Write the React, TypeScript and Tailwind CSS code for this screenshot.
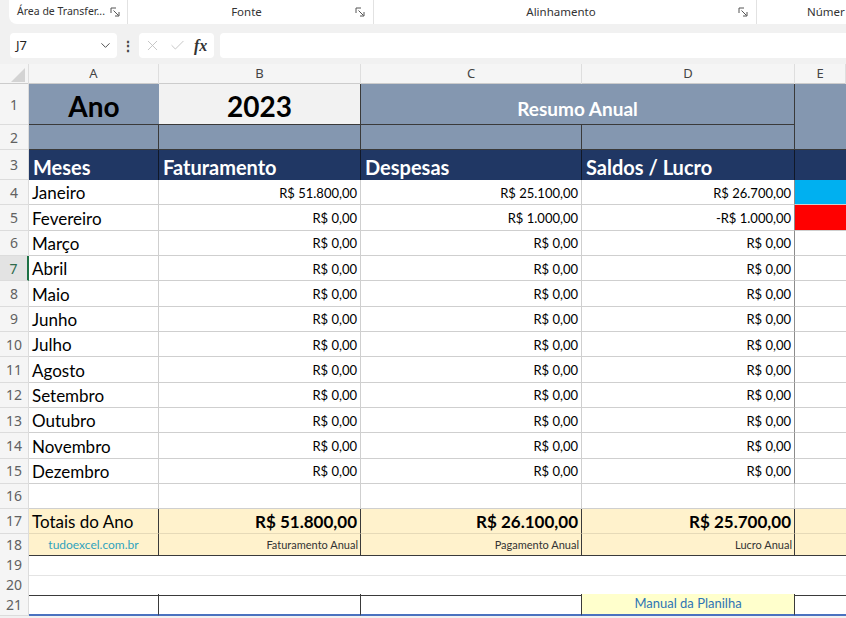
import { X, Check, ChevronDown } from 'lucide-react';

const GRID = 'grid grid-cols-[29px_130px_202px_221px_213px_1fr]';
const CELL = "flex items-end overflow-hidden whitespace-nowrap font-['Lato',sans-serif]";
const DATA = 'border-r border-b border-[#cfcfcf]';

const months = [
  'Janeiro', 'Fevereiro', 'Março', 'Abril', 'Maio', 'Junho',
  'Julho', 'Agosto', 'Setembro', 'Outubro', 'Novembro', 'Dezembro',
];

const values: Record<string, [string, string, string]> = {
  Janeiro: ['R$ 51.800,00', 'R$ 25.100,00', 'R$ 26.700,00'],
  Fevereiro: ['R$ 0,00', 'R$ 1.000,00', '-R$ 1.000,00'],
};

function Launcher() {
  return (
    <svg width="10" height="10" viewBox="0 0 10 10" className="shrink-0 text-[#555]">
      <path d="M1 6V1h5" fill="none" stroke="currentColor" strokeWidth="1" />
      <path d="M3.5 3.5l5 5M9 5v4H5" fill="none" stroke="currentColor" strokeWidth="1" />
    </svg>
  );
}

function RowHead({ n, selected }: { n: number; selected?: boolean }) {
  return selected ? (
    <div className="flex items-center justify-center bg-[#e3e3e3] border-r-2 border-r-[#1e7145] border-b border-b-[#dcdcdc] font-['Noto_Sans',sans-serif] text-[14px] text-[#2f6b4c]">
      {n}
    </div>
  ) : (
    <div className="flex items-center justify-center bg-[#f5f5f5] border-r border-b border-[#dcdcdc] font-['Noto_Sans',sans-serif] text-[14px] text-[#616161]">
      {n}
    </div>
  );
}

export default function App() {
  return (
    <div className="w-[846px] h-[618px] overflow-hidden bg-[#f1f1f1] text-black font-['Noto_Sans',sans-serif]">
      {/* ribbon group labels */}
      <div className="ml-[9px] h-[24px] flex bg-white rounded-bl-lg text-[11.5px] text-[#333] whitespace-nowrap">
        <div className="w-[119px] flex items-center pl-[8px] pr-[7px] border-r border-[#e2e2e2]">
          <span className="flex-1 text-[10.5px]">Área de Transfer...</span>
          <Launcher />
        </div>
        <div className="w-[246px] flex items-center pr-[8px] border-r border-[#e2e2e2]">
          <span className="flex-1 text-center pl-[10px]">Fonte</span>
          <Launcher />
        </div>
        <div className="w-[383px] flex items-center pr-[8px] border-r border-[#e2e2e2]">
          <span className="flex-1 text-center pl-[10px]">Alinhamento</span>
          <Launcher />
        </div>
        <div className="flex-1 flex items-center pl-[50px] overflow-hidden">Númer</div>
      </div>

      {/* formula bar */}
      <div className="mt-[9px] h-[25px] flex items-center">
        <div className="ml-[10px] w-[107px] h-full flex items-center justify-between bg-white rounded pl-[6px] pr-[4px] text-[13px] text-[#222]">
          <span>J7</span>
          <ChevronDown size={15} strokeWidth={1.5} className="text-[#444]" />
        </div>
        <div className="w-[22px] flex justify-center text-[#444] text-[14px] font-bold leading-none">⋮</div>
        <div className="w-[75px] h-full flex items-center gap-[8px] bg-white rounded pl-[5px]">
          <X size={17} strokeWidth={1.2} className="text-[#bdbdbd]" />
          <Check size={17} strokeWidth={1.2} className="text-[#bdbdbd]" />
          <span className="font-['Liberation_Serif',serif] italic font-bold text-[16px] text-[#333] leading-none">fx</span>
        </div>
        <div className="ml-[6px] flex-1 h-full bg-white rounded-l"></div>
      </div>

      {/* column headers */}
      <div className={`${GRID} mt-[6px] h-[20px] bg-[#f5f5f5] border-b border-[#cccccc] font-['Noto_Sans',sans-serif] text-[13px] text-[#444]`}>
        <div className="relative border-r border-[#dedede]">
          <svg width="14" height="14" viewBox="0 0 14 14" className="absolute right-[3px] bottom-[2px]">
            <path d="M14 0V14H0Z" fill="#d3d3d3" />
          </svg>
        </div>
        {['A', 'B', 'C', 'D', 'E'].map((c) => (
          <div key={c} className="flex items-center justify-center border-r border-[#dedede]">{c}</div>
        ))}
      </div>

      {/* row 1 */}
      <div className={`${GRID} h-[41px]`}>
        <RowHead n={1} />
        <div className={`${CELL} justify-center bg-[#8497b0] border-b border-[#3a3a3a] text-[28px] font-bold leading-[36px]`}>Ano</div>
        <div className={`${CELL} justify-center bg-[#f2f2f2] border-r border-b border-[#3a3a3a] text-[28px] font-bold leading-[36px]`}>2023</div>
        <div className={`${CELL} col-span-2 justify-center pb-[1px] bg-[#8497b0] border-r border-b border-[#3a3a3a] text-[19px] font-bold text-white`}>Resumo Anual</div>
        <div className="bg-[#8497b0]"></div>
      </div>

      {/* row 2 */}
      <div className={`${GRID} h-[25px]`}>
        <RowHead n={2} />
        <div className="bg-[#8497b0] border-r border-b border-[#3a3a3a]"></div>
        <div className="bg-[#8497b0] border-r border-b border-[#3a3a3a]"></div>
        <div className="bg-[#8497b0] border-r border-b border-[#3a3a3a]"></div>
        <div className="bg-[#8497b0] border-r border-b border-[#3a3a3a]"></div>
        <div className="bg-[#8497b0] border-b border-[#3a3a3a]"></div>
      </div>

      {/* row 3 */}
      <div className={`${GRID} h-[30px]`}>
        <RowHead n={3} />
        {['Meses', 'Faturamento', 'Despesas', 'Saldos / Lucro'].map((h) => (
          <div key={h} className={`${CELL} pl-[4px] bg-[#203764] border-r border-[#101828] text-[20px] font-bold text-white leading-[26px]`}>{h}</div>
        ))}
        <div className="bg-[#203764]"></div>
      </div>

      {/* rows 4-15 */}
      {months.map((m, i) => {
        const v = values[m] ?? ['R$ 0,00', 'R$ 0,00', 'R$ 0,00'];
        return (
          <div key={m} className={`${GRID} h-[25.33px] bg-white`}>
            <RowHead n={i + 4} selected={i === 3} />
            <div className={`${CELL} pl-[3px] ${DATA} text-[17px] leading-[22px]`}>{m}</div>
            <div className={`${CELL} justify-end pr-[3px] pb-[1px] ${DATA} text-[13px]`}>{v[0]}</div>
            <div className={`${CELL} justify-end pr-[3px] pb-[1px] ${DATA} text-[13px]`}>{v[1]}</div>
            <div className={`${CELL} justify-end pr-[3px] pb-[1px] border-b border-[#cfcfcf] border-r border-r-[#8c8c8c] text-[13px]`}>{v[2]}</div>
            <div
              className={
                i === 0
                  ? 'bg-[#00b0f0] border-b border-[#cfcfcf]'
                  : i === 1
                    ? 'bg-[#ff0000] border-b border-[#cfcfcf]'
                    : 'border-b border-[#cfcfcf]'
              }
            ></div>
          </div>
        );
      })}

      {/* row 16 */}
      <div className={`${GRID} h-[25px] bg-white`}>
        <RowHead n={16} />
        <div className={DATA}></div>
        <div className={DATA}></div>
        <div className={DATA}></div>
        <div className={DATA}></div>
        <div className="border-b border-[#cfcfcf]"></div>
      </div>

      {/* row 17 */}
      <div className={`${GRID} h-[25px] bg-white`}>
        <RowHead n={17} />
        <div className={`${CELL} pl-[3px] bg-[#fff2cc] border-r border-r-[#3a3a3a] border-b border-b-[#e6dab8] text-[17px] leading-[22px]`}>Totais do Ano</div>
        <div className={`${CELL} justify-end pr-[3px] bg-[#fff2cc] border-r border-r-[#3a3a3a] border-b border-b-[#e6dab8] text-[17px] leading-[22px] font-bold`}>R$ 51.800,00</div>
        <div className={`${CELL} justify-end pr-[3px] bg-[#fff2cc] border-r border-r-[#3a3a3a] border-b border-b-[#e6dab8] text-[17px] leading-[22px] font-bold`}>R$ 26.100,00</div>
        <div className={`${CELL} justify-end pr-[3px] bg-[#fff2cc] border-r border-r-[#3a3a3a] border-b border-b-[#e6dab8] text-[17px] leading-[22px] font-bold`}>R$ 25.700,00</div>
        <div className="bg-[#fff2cc] border-b border-[#e6dab8]"></div>
      </div>

      {/* row 18 */}
      <div className={`${GRID} h-[20px] bg-white`}>
        <RowHead n={18} />
        <div className={`${CELL} justify-center pb-[1px] bg-[#fff2cc] border-r border-b border-[#3a3a3a] text-[12px] text-[#31a3bd]`}>tudoexcel.com.br</div>
        <div className={`${CELL} justify-end pr-[2px] pb-[1px] bg-[#fff2cc] border-r border-b border-[#3a3a3a] text-[11px] text-[#333]`}>Faturamento Anual</div>
        <div className={`${CELL} justify-end pr-[2px] pb-[1px] bg-[#fff2cc] border-r border-b border-[#3a3a3a] text-[11px] text-[#333]`}>Pagamento Anual</div>
        <div className={`${CELL} justify-end pr-[2px] pb-[1px] bg-[#fff2cc] border-r border-b border-[#3a3a3a] text-[11px] text-[#333]`}>Lucro Anual</div>
        <div className="bg-[#fff2cc] border-b border-[#3a3a3a]"></div>
      </div>

      {/* rows 19-20 */}
      <div className={`${GRID} h-[20px] bg-white`}>
        <RowHead n={19} />
        <div className="col-span-5 border-b border-[#e4e4e4]"></div>
      </div>
      <div className={`${GRID} h-[20px] bg-white`}>
        <RowHead n={20} />
        <div className="col-span-5 border-b border-[#3a3a3a]"></div>
      </div>

      {/* row 21 */}
      <div className={`${GRID} h-[21px] bg-white`}>
        <RowHead n={21} />
        <div className="border-r border-b-2 border-r-[#3a3a3a] border-b-[#4a72c0]"></div>
        <div className="border-r border-b-2 border-r-[#3a3a3a] border-b-[#4a72c0]"></div>
        <div className="border-r border-b-2 border-r-[#3a3a3a] border-b-[#4a72c0]"></div>
        <div className={`${CELL} justify-center bg-[#ffffcc] border-r border-b-2 border-r-[#3a3a3a] border-b-[#4a72c0] text-[13px] text-[#2e74b5]`}>Manual da Planilha</div>
        <div className="border-b-2 border-[#4a72c0]"></div>
      </div>
    </div>
  );
}
